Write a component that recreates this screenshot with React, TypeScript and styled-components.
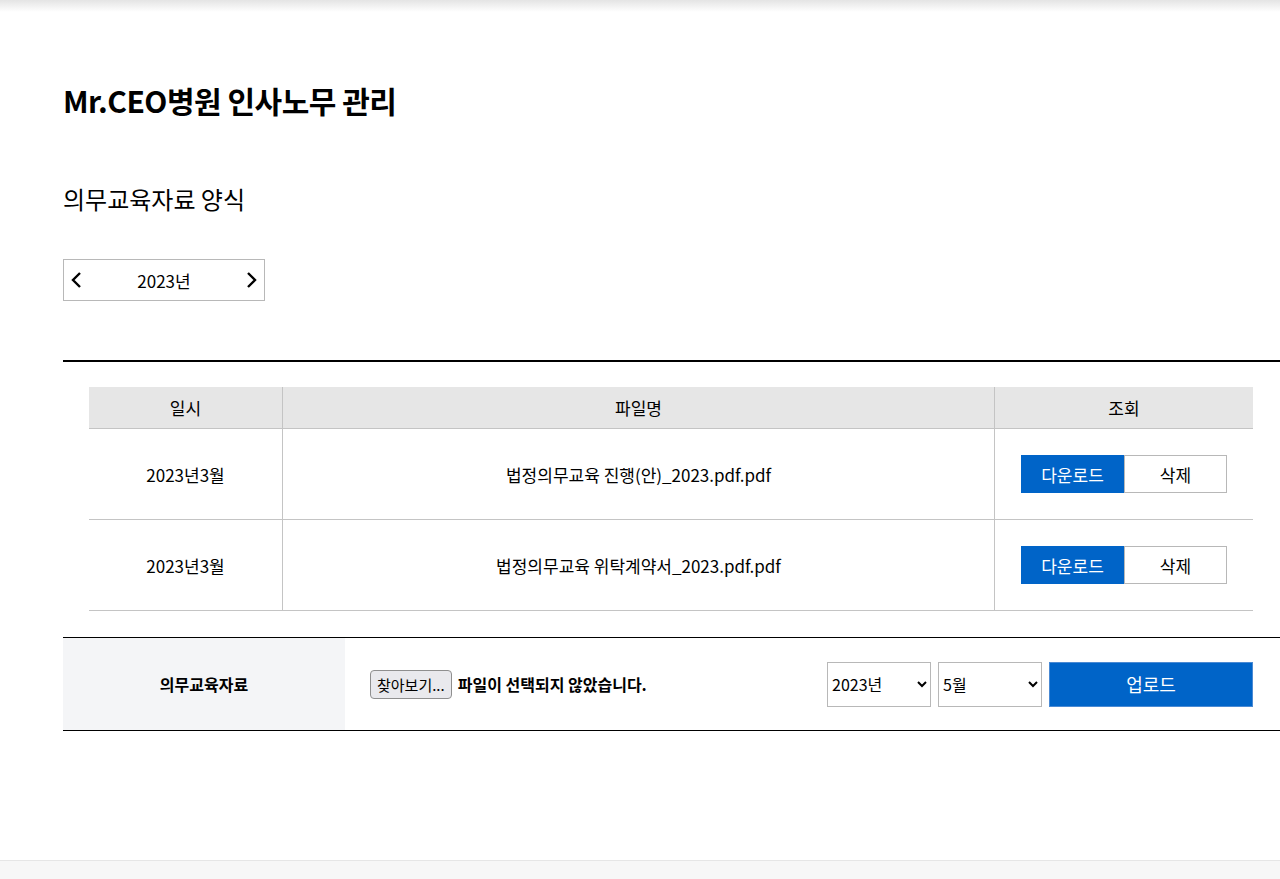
import React, { useState } from "react";
import styled, { createGlobalStyle } from "styled-components";

const Global = createGlobalStyle`
  html, body { margin: 0; padding: 0; background: #fff; }
  body { font-family: "Noto Sans CJK KR", "Noto Sans", sans-serif; color: #000; }
`;

const files = [
  { date: "2023년3월", name: "법정의무교육 진행(안)_2023.pdf.pdf" },
  { date: "2023년3월", name: "법정의무교육 위탁계약서_2023.pdf.pdf" },
];

export default function App() {
  const [year, setYear] = useState(2023);
  return (
    <Page>
      <Global />
      <TopShade />
      <Main>
        <Title>Mr.CEO병원 인사노무 관리</Title>
        <SubTitle>의무교육자료 양식</SubTitle>
        <YearBox>
          <Arrow onClick={() => setYear(year - 1)}>
            <svg width="14" height="18" viewBox="0 0 14 18">
              <path d="M10 2 L3 9 L10 16" fill="none" stroke="#000" strokeWidth="2.4" />
            </svg>
          </Arrow>
          <span>{year}년</span>
          <Arrow onClick={() => setYear(year + 1)}>
            <svg width="14" height="18" viewBox="0 0 14 18">
              <path d="M4 2 L11 9 L4 16" fill="none" stroke="#000" strokeWidth="2.4" />
            </svg>
          </Arrow>
        </YearBox>
        <Divider />
        <TableWrap>
          <Table>
            <thead>
              <tr>
                <Th style={{ width: 191 }}>일시</Th>
                <Th>파일명</Th>
                <Th style={{ width: 256 }}>조회</Th>
              </tr>
            </thead>
            <tbody>
              {files.map((f, i) => (
                <tr key={i}>
                  <Td>{f.date}</Td>
                  <Td>{f.name}</Td>
                  <Td>
                    <BtnGroup>
                      <SmallBtn primary>다운로드</SmallBtn>
                      <SmallBtn>삭제</SmallBtn>
                    </BtnGroup>
                  </Td>
                </tr>
              ))}
            </tbody>
          </Table>
        </TableWrap>
        <UploadRow>
          <UploadLabel>의무교육자료</UploadLabel>
          <UploadBody>
            <FileBtn>찾아보기...</FileBtn>
            <FileText>파일이 선택되지 않았습니다.</FileText>
            <Spacer />
            <Select defaultValue="2023">
              <option value="2023">2023년</option>
            </Select>
            <Select defaultValue="5">
              <option value="5">5월</option>
            </Select>
            <UploadBtn>업로드</UploadBtn>
          </UploadBody>
        </UploadRow>
      </Main>
      <BottomBar />
    </Page>
  );
}

const Page = styled.div`
  min-height: 879px;
  display: flex;
  flex-direction: column;
`;

const TopShade = styled.div`
  height: 12px;
  background: linear-gradient(#e4e4e4, #fff);
`;

const Main = styled.div`
  flex: 1;
  padding-left: 63px;
`;

const Title = styled.h1`
  margin: 68px 0 0;
  font-size: 30px;
  font-weight: 700;
  line-height: 40px;
  letter-spacing: -0.5px;
`;

const SubTitle = styled.h2`
  margin: 63px 0 0;
  font-size: 24px;
  font-weight: 400;
  line-height: 32px;
`;

const YearBox = styled.div`
  margin-top: 44px;
  width: 202px;
  height: 42px;
  border: 1px solid #b8b8b8;
  display: flex;
  align-items: center;
  justify-content: space-between;
  padding: 0 6px;
  box-sizing: border-box;
  font-size: 17px;
`;

const Arrow = styled.button`
  background: none;
  border: none;
  padding: 0;
  display: flex;
  cursor: pointer;
`;

const Divider = styled.div`
  margin-top: 59px;
  height: 2px;
  background: #000;
`;

const TableWrap = styled.div`
  padding: 25px 27px 0 26px;
`;

const Table = styled.table`
  width: 100%;
  border-collapse: collapse;
  font-size: 17px;
`;

const Th = styled.th`
  background: #e6e6e6;
  height: 39px;
  font-weight: 400;
  border-bottom: 1px solid #c4c4c4;
  & + & { border-left: 1px solid #c4c4c4; }
`;

const Td = styled.td`
  height: 88px;
  text-align: center;
  border-bottom: 1px solid #c4c4c4;
  & + & { border-left: 1px solid #c4c4c4; }
`;

const BtnGroup = styled.div`
  display: inline-flex;
`;

const SmallBtn = styled.button<{ primary?: boolean }>`
  width: 103px;
  height: 38px;
  font: inherit;
  font-size: 17px;
  border: 1px solid ${(p) => (p.primary ? "#0064c8" : "#b8b8b8")};
  background: ${(p) => (p.primary ? "#0064c8" : "#fff")};
  color: ${(p) => (p.primary ? "#fff" : "#000")};
  cursor: pointer;
`;

const UploadRow = styled.div`
  margin-top: 26px;
  display: flex;
  height: 92px;
  border-top: 1px solid #000;
  border-bottom: 1px solid #000;
`;

const UploadLabel = styled.div`
  width: 282px;
  background: #f4f5f7;
  display: flex;
  align-items: center;
  justify-content: center;
  font-size: 16px;
  font-weight: 700;
`;

const UploadBody = styled.div`
  flex: 1;
  display: flex;
  align-items: center;
  padding: 0 27px 0 25px;
`;

const FileBtn = styled.button`
  font: inherit;
  font-size: 15px;
  padding: 0 6px;
  height: 29px;
  border: 1px solid #8f8f8f;
  border-radius: 4px;
  background: #e9e9ed;
`;

const FileText = styled.span`
  margin-left: 6px;
  font-size: 16px;
  font-weight: 700;
`;

const Spacer = styled.div`
  flex: 1;
`;

const Select = styled.select`
  width: 104px;
  height: 45px;
  margin-right: 7px;
  font: inherit;
  font-size: 16px;
  border: 1px solid #b8b8b8;
  background: #fff;
  padding: 0;
`;

const UploadBtn = styled.button`
  width: 204px;
  height: 45px;
  background: #0064c8;
  color: #fff;
  border: 1px solid #4a8ad4;
  font: inherit;
  font-size: 18px;
  cursor: pointer;
`;

const BottomBar = styled.div`
  height: 18px;
  background: #f7f7f7;
  border-top: 1px solid #e6e6e6;
`;
